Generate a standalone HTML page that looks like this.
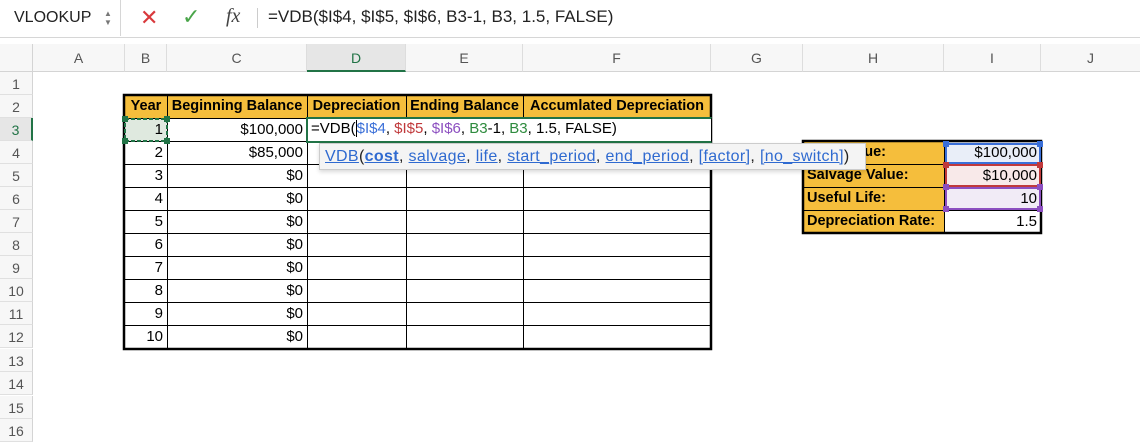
<!DOCTYPE html>
<html><head><meta charset="utf-8"><style>
*{box-sizing:border-box;margin:0;padding:0}
body{width:1140px;height:431px;overflow:hidden;background:#fff;font-family:"Liberation Sans",sans-serif;position:relative}
.a{position:absolute}
.fb{position:absolute;left:0;top:0;width:1140px;height:38px;background:#fff;border-bottom:1px solid #d6d6d6}
.hdr{position:absolute;top:44px;height:28px;background:#f7f7f7;border-bottom:1px solid #d4d4d4;font-size:14px;color:#555;text-align:center;line-height:28px}
.rh{position:absolute;left:0;width:33px;height:23px;background:#f7f7f7;border-bottom:1px solid #e0e0e0;border-right:1px solid #d4d4d4;font-size:14px;color:#555;text-align:center;line-height:24px}
.c{position:absolute;height:23px;font-size:15px;line-height:23px;padding:0 4px;white-space:nowrap;overflow:hidden}
.y{background:#f5be3c;font-weight:bold;text-align:center;font-size:14.5px;padding:0 2px}
.r{text-align:right}
</style></head><body>
<div class="fb">
 <div class="a" style="left:0;top:0;width:121px;height:36px;border-right:1px solid #d6d6d6;font-size:16px;line-height:36px;padding-left:14px;color:#222">VLOOKUP</div>
 <div class="a" style="left:104px;top:9px;font-size:8px;color:#777;line-height:9px">▲<br>▼</div>
 <div class="a" style="left:140px;top:5px;font-size:22px;color:#d9393c">✕</div>
 <div class="a" style="left:182px;top:4px;font-size:22px;color:#4aa54a">✓</div>
 <div class="a" style="left:226px;top:5px;font-size:20px;font-style:italic;font-family:'Liberation Serif',serif;color:#444">fx</div>
 <div class="a" style="left:257px;top:8px;width:1px;height:20px;background:#ccc"></div>
 <div class="a" style="left:268px;top:7px;font-size:17px;color:#222;white-space:nowrap">=VDB($I$4, $I$5, $I$6, B3-1, B3, 1.5, FALSE)</div>
</div>
<div class="hdr" style="left:0;width:33px;border-right:1px solid #d4d4d4"></div>
<div class="hdr" style="left:33px;width:92px;border-right:1px solid #ddd">A</div>
<div class="hdr" style="left:125px;width:42px;border-right:1px solid #ddd">B</div>
<div class="hdr" style="left:167px;width:140px;border-right:1px solid #ddd">C</div>
<div class="hdr" style="left:307px;width:99px;border-right:1px solid #ddd;background:#e6e6e6;color:#217346;border-bottom:2px solid #217346">D</div>
<div class="hdr" style="left:406px;width:117px;border-right:1px solid #ddd">E</div>
<div class="hdr" style="left:523px;width:188px;border-right:1px solid #ddd">F</div>
<div class="hdr" style="left:711px;width:92px;border-right:1px solid #ddd">G</div>
<div class="hdr" style="left:803px;width:141px;border-right:1px solid #ddd">H</div>
<div class="hdr" style="left:944px;width:97px;border-right:1px solid #ddd">I</div>
<div class="hdr" style="left:1041px;width:99px">J</div>
<div class="rh" style="top:72px">1</div>
<div class="rh" style="top:95px">2</div>
<div class="rh" style="top:118px;background:#e6e6e6;color:#217346;border-right:2px solid #217346">3</div>
<div class="rh" style="top:141px">4</div>
<div class="rh" style="top:164px">5</div>
<div class="rh" style="top:187px">6</div>
<div class="rh" style="top:210px">7</div>
<div class="rh" style="top:233px">8</div>
<div class="rh" style="top:256px">9</div>
<div class="rh" style="top:279px">10</div>
<div class="rh" style="top:302px">11</div>
<div class="rh" style="top:325px">12</div>
<div class="rh" style="top:349px">13</div>
<div class="rh" style="top:372px">14</div>
<div class="rh" style="top:396px">15</div>
<div class="rh" style="top:419px">16</div>

<div class="c y" style="left:125px;top:95px;width:42px">Year</div>
<div class="c y" style="left:167px;top:95px;width:140px">Beginning Balance</div>
<div class="c y" style="left:307px;top:95px;width:99px">Depreciation</div>
<div class="c y" style="left:406px;top:95px;width:117px">Ending Balance</div>
<div class="c y" style="left:523px;top:95px;width:188px">Accumlated Depreciation</div>
<div class="a" style="left:126px;top:119px;width:41px;height:22px;background:#dfe9df"></div>
<div class="c r" style="left:125px;top:118px;width:42px">1</div>
<div class="c r" style="left:167px;top:118px;width:140px">$100,000</div>
<div class="c r" style="left:125px;top:141px;width:42px">2</div><div class="c r" style="left:167px;top:141px;width:140px">$85,000</div>
<div class="c r" style="left:125px;top:164px;width:42px">3</div><div class="c r" style="left:167px;top:164px;width:140px">$0</div>
<div class="c r" style="left:125px;top:187px;width:42px">4</div><div class="c r" style="left:167px;top:187px;width:140px">$0</div>
<div class="c r" style="left:125px;top:210px;width:42px">5</div><div class="c r" style="left:167px;top:210px;width:140px">$0</div>
<div class="c r" style="left:125px;top:233px;width:42px">6</div><div class="c r" style="left:167px;top:233px;width:140px">$0</div>
<div class="c r" style="left:125px;top:256px;width:42px">7</div><div class="c r" style="left:167px;top:256px;width:140px">$0</div>
<div class="c r" style="left:125px;top:279px;width:42px">8</div><div class="c r" style="left:167px;top:279px;width:140px">$0</div>
<div class="c r" style="left:125px;top:302px;width:42px">9</div><div class="c r" style="left:167px;top:302px;width:140px">$0</div>
<div class="c r" style="left:125px;top:325px;width:42px">10</div><div class="c r" style="left:167px;top:325px;width:140px">$0</div>
<svg class="a" style="left:0;top:0" width="1140" height="431">
 <g stroke="#000" stroke-width="1">
  <line x1="125" y1="118.5" x2="711" y2="118.5"/>
  <line x1="125" y1="141.5" x2="711" y2="141.5"/>
  <line x1="125" y1="164.5" x2="711" y2="164.5"/>
  <line x1="125" y1="187.5" x2="711" y2="187.5"/>
  <line x1="125" y1="210.5" x2="711" y2="210.5"/>
  <line x1="125" y1="233.5" x2="711" y2="233.5"/>
  <line x1="125" y1="256.5" x2="711" y2="256.5"/>
  <line x1="125" y1="279.5" x2="711" y2="279.5"/>
  <line x1="125" y1="302.5" x2="711" y2="302.5"/>
  <line x1="125" y1="325.5" x2="711" y2="325.5"/>
  <line x1="167.5" y1="95" x2="167.5" y2="349"/>
  <line x1="307.5" y1="95" x2="307.5" y2="349"/>
  <line x1="406.5" y1="95" x2="406.5" y2="349"/>
  <line x1="523.5" y1="95" x2="523.5" y2="349"/>
 </g>
 <rect x="124" y="95" width="587" height="254" fill="none" stroke="#000" stroke-width="2.5"/>
 <rect x="125" y="119" width="42" height="22" fill="none" stroke="#217346" stroke-width="2" stroke-dasharray="4 2"/>
 <g fill="#217346"><rect x="122" y="116" width="6" height="6"/><rect x="164" y="116" width="6" height="6"/><rect x="122" y="138" width="6" height="6"/><rect x="164" y="138" width="6" height="6"/></g>
</svg>
<div class="a" style="left:306px;top:117px;width:406px;height:26px;background:#fff;border:2px solid #217346;border-right:1px solid #000"></div>
<div class="a" style="left:311px;top:120px;font-size:15px;white-space:nowrap">=VDB(<span style="border-left:1px solid #000"></span><span style="color:#3a6fd8">$I$4</span>, <span style="color:#c0393b">$I$5</span>, <span style="color:#8c4fc0">$I$6</span>, <span style="color:#2e8b3e">B3</span>-1, <span style="color:#2e8b3e">B3</span>, 1.5, FALSE)</div>

<div class="c y" style="left:803px;top:141px;width:141px;text-align:left;padding-left:4px">Cost Value:</div>
<div class="c y" style="left:803px;top:164px;width:141px;text-align:left;padding-left:4px">Salvage Value:</div>
<div class="c y" style="left:803px;top:187px;width:141px;text-align:left;padding-left:4px">Useful Life:</div>
<div class="c y" style="left:803px;top:210px;width:141px;text-align:left;padding-left:4px">Depreciation Rate:</div>
<div class="c r" style="left:944px;top:141px;width:97px;background:#e9eef8">$100,000</div>
<div class="c r" style="left:944px;top:164px;width:97px;background:#f8e9e9">$10,000</div>
<div class="c r" style="left:944px;top:187px;width:97px;background:#f1ebf6">10</div>
<div class="c r" style="left:944px;top:210px;width:97px">1.5</div>
<svg class="a" style="left:0;top:0;z-index:2" width="1140" height="431">
 <g stroke="#000" stroke-width="1">
  <line x1="803" y1="164.5" x2="1041" y2="164.5"/><line x1="803" y1="187.5" x2="1041" y2="187.5"/><line x1="803" y1="210.5" x2="1041" y2="210.5"/>
  <line x1="944.5" y1="141" x2="944.5" y2="233"/>
 </g>
 <rect x="803" y="141" width="238" height="92" fill="none" stroke="#000" stroke-width="2.5"/>
 <rect x="946" y="144" width="94" height="19" fill="none" stroke="#3a6fd8" stroke-width="2"/>
 <rect x="946" y="165" width="94" height="21" fill="none" stroke="#c0393b" stroke-width="2"/>
 <rect x="946" y="188" width="94" height="21" fill="none" stroke="#8c4fc0" stroke-width="2"/>
 <g fill="#3a6fd8"><rect x="943" y="141" width="6" height="6"/><rect x="1037" y="141" width="6" height="6"/></g>
 <g fill="#c0393b"><rect x="943" y="162" width="6" height="6"/><rect x="1037" y="162" width="6" height="6"/></g>
 <g fill="#8c4fc0"><rect x="943" y="184" width="6" height="6"/><rect x="1037" y="184" width="6" height="6"/><rect x="943" y="206" width="6" height="6"/><rect x="1037" y="206" width="6" height="6"/></g>
</svg>
<div class="a" style="left:319px;top:143px;width:547px;height:27px;background:#f4f4f4;border:1px solid #ccc;box-shadow:0 2px 4px rgba(0,0,0,.15);font-size:16px;letter-spacing:0.35px;line-height:25px;padding-left:5px;white-space:nowrap;overflow:hidden;color:#222;z-index:5">
<u style="color:#2f6ad0">VDB</u>(<u style="color:#2f6ad0;font-weight:bold">cost</u>, <u style="color:#2f6ad0">salvage</u>, <u style="color:#2f6ad0">life</u>, <u style="color:#2f6ad0">start_period</u>, <u style="color:#2f6ad0">end_period</u>, <u style="color:#2f6ad0">[factor]</u>, <u style="color:#2f6ad0">[no_switch]</u>)</div>
</body></html>
